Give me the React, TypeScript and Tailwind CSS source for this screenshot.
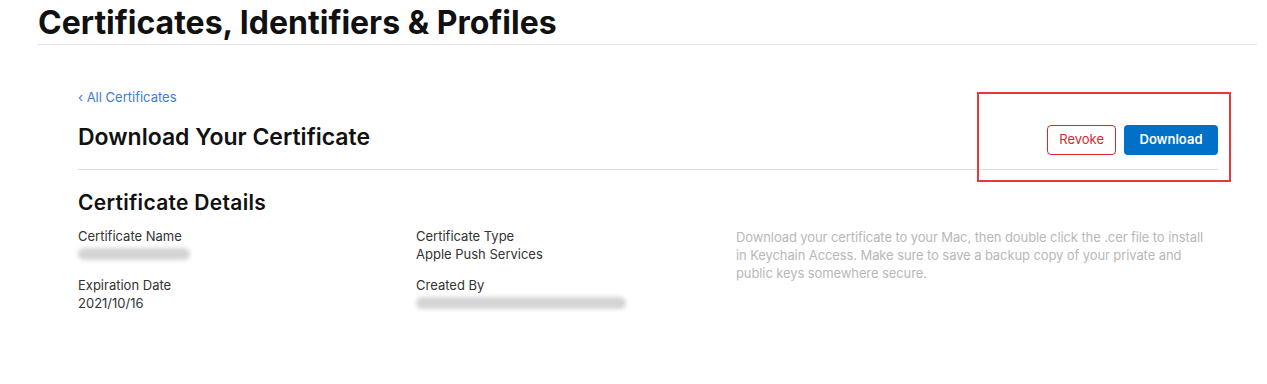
import React from "react";

const Blur: React.FC<{w: number}> = ({w}) => (
  <span
    className="inline-block h-[12px] rounded-full bg-[#d4d4d4] blur-[2px] align-middle"
    style={{width: w}}
  />
);

const Field: React.FC<{label: string; children: React.ReactNode}> = ({label, children}) => (
  <div className="flex flex-col">
    <div className="text-[13px] leading-[18px] text-[#333]">{label}</div>
    <div className="text-[13px] leading-[18px] text-[#333] h-[18px] flex items-center">{children}</div>
  </div>
);

export default function App() {
  return (
    <div className="w-[1267px] h-[384px] bg-white overflow-hidden" style={{fontFamily: "Inter, 'Noto Sans', sans-serif"}}>
      <div className="pl-[38px] pr-[10px]">
        <h1 className="text-[32px] leading-[44px] font-bold text-[#111] pt-[1px] border-b border-[#e3e3e3] h-[45px]">
          Certificates, Identifiers &amp; Profiles
        </h1>
      </div>

      <div className="pl-[78px] w-[1218px]">
        <div className="pt-[44px] flex items-start justify-between border-b border-[#dcdcdc] pb-[14px]">
          <div>
            <a className="text-[13px] leading-[16px] text-[#3e7bd8] block">‹ All Certificates</a>
            <h2 className="text-[23px] leading-[28px] font-semibold text-[#111] mt-[18px]">Download Your Certificate</h2>
          </div>
          <div className="relative mt-[36px]">
            <div className="flex gap-[8px]">
              <button className="h-[30px] px-[11px] rounded-[4px] border border-[#d9262f] text-[#d9262f] text-[13px]">Revoke</button>
              <button className="h-[30px] w-[94px] rounded-[4px] bg-[#0070c9] text-white text-[13px] font-semibold">Download</button>
            </div>
            <div className="absolute left-[-70px] top-[-33px] w-[254px] h-[90px] border-2 border-[#e8383c]" />
          </div>
        </div>

        <h3 className="text-[21px] leading-[26px] font-semibold text-[#111] mt-[20px] tracking-[0.3px]">Certificate Details</h3>

        <div className="grid grid-cols-[338px_320px_1fr] mt-[11px]">
          <div className="flex flex-col gap-[13px]">
            <Field label="Certificate Name"><Blur w={112} /></Field>
            <Field label="Expiration Date">2021/10/16</Field>
          </div>
          <div className="flex flex-col gap-[13px]">
            <Field label="Certificate Type">Apple Push Services</Field>
            <Field label="Created By"><Blur w={210} /></Field>
          </div>
          <p className="text-[13px] leading-[18px] text-[#b8b8b8] w-[472px] pt-[1px] tracking-[-0.1px]">
            Download your certificate to your Mac, then double click the .cer file to install in Keychain Access. Make sure to save a backup copy of your private and public keys somewhere secure.
          </p>
        </div>
      </div>
    </div>
  );
}
